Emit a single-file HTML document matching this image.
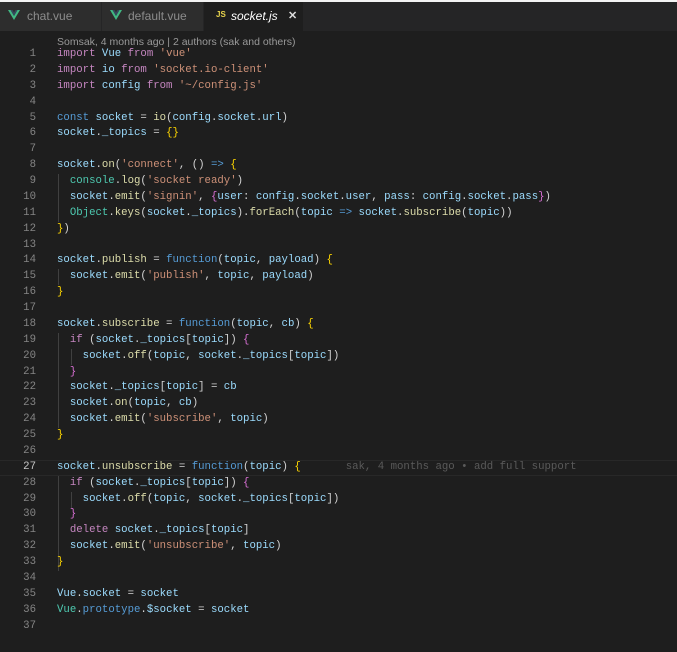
<!DOCTYPE html>
<html><head><meta charset="utf-8"><style>
*{margin:0;padding:0;box-sizing:border-box}
body{width:677px;height:652px;background:#1e1e1e;overflow:hidden;position:relative;font-family:"Liberation Sans",sans-serif}
.top{position:absolute;left:0;top:0;width:677px;height:2px;background:#f3f3f3}
.bar{position:absolute;left:0;top:2px;width:677px;height:29px;background:#252526}
.tab{position:absolute;top:2px;height:29px;background:#2d2d2d;color:#8c8c8c;font-size:12px;line-height:29px;font-style:normal}
.tab.act{background:#1e1e1e;color:#fff;font-style:italic}
.v{position:absolute;left:8px;top:8px;width:12px;height:10px}
.lens{position:absolute;left:57px;top:36px;font-size:10.5px;color:#999}
.ln{position:absolute;left:0;width:36px;text-align:right;font-family:"Liberation Mono",monospace;font-size:10.7px;color:#858585;line-height:15.87px}
.code{position:absolute;left:57px;top:47px;font-family:"Liberation Mono",monospace;font-size:10.7px;color:#d4d4d4;line-height:15.87px;white-space:pre}
.k{color:#c586c0}.b{color:#569cd6}.s{color:#ce9178}.f{color:#dcdcaa}.t{color:#4ec9b0}.p{color:#9cdcfe}.y{color:#ffd700}.o{color:#da70d6}
.g{position:absolute;width:1px;background:#404040}
.cur{position:absolute;left:0;top:460px;width:677px;height:16px;border-top:1px solid #282828;border-bottom:1px solid #282828}
</style></head><body>
<div class="top"></div>
<div class="bar"></div>
<div class="tab" style="left:0;width:101px"><svg class="v" viewBox="0 0 12 10"><path d="M0 0h2.5L6 6 9.5 0H12L6 10z" fill="#41b883"/><path d="M2.5 0h2L6 2.5 7.5 0h2L6 6z" fill="#35495e"/></svg><span style="position:absolute;left:27px">chat.vue</span></div>
<div class="tab" style="left:102px;width:101px"><svg class="v" viewBox="0 0 12 10"><path d="M0 0h2.5L6 6 9.5 0H12L6 10z" fill="#41b883"/><path d="M2.5 0h2L6 2.5 7.5 0h2L6 6z" fill="#35495e"/></svg><span style="position:absolute;left:26px">default.vue</span></div>
<div class="tab act" style="left:204px;width:99px"><span style="position:absolute;left:12px;top:-2px;font-size:8px;font-weight:bold;color:#e8d44d;font-style:normal">JS</span><span style="position:absolute;left:27px">socket.js</span><span style="position:absolute;left:84px;font-style:normal;font-weight:bold;font-size:11px;color:#ddd">✕</span></div>
<div class="lens">Somsak, 4 months ago | 2 authors (sak and others)</div>
<div class="cur"></div>
<div class="ln" style="top:47px">1<br>2<br>3<br>4<br>5<br>6<br>7<br>8<br>9<br>10<br>11<br>12<br>13<br>14<br>15<br>16<br>17<br>18<br>19<br>20<br>21<br>22<br>23<br>24<br>25<br>26<br><span style="color:#c6c6c6">27</span><br>28<br>29<br>30<br>31<br>32<br>33<br>34<br>35<br>36<br>37</div>
<div class="g" style="left:58px;top:174px;height:48px"></div>
<div class="g" style="left:58px;top:269px;height:16px"></div>
<div class="g" style="left:58px;top:333px;height:95px"></div>
<div class="g" style="left:71px;top:349px;height:16px"></div>
<div class="g" style="left:58px;top:476px;height:95px"></div>
<div class="g" style="left:71px;top:492px;height:16px"></div>
<div class="code"><span class="k">import</span> <span class="p">Vue</span> <span class="k">from</span> <span class="s">'vue'</span>
<span class="k">import</span> <span class="p">io</span> <span class="k">from</span> <span class="s">'socket.io-client'</span>
<span class="k">import</span> <span class="p">config</span> <span class="k">from</span> <span class="s">'~/config.js'</span>

<span class="b">const</span> <span class="p">socket</span> = <span class="f">io</span>(<span class="p">config</span>.<span class="p">socket</span>.<span class="p">url</span>)
<span class="p">socket</span>.<span class="p">_topics</span> = <span class="y">{}</span>

<span class="p">socket</span>.<span class="f">on</span>(<span class="s">'connect'</span>, () <span class="b">=&gt;</span> <span class="y">{</span>
  <span class="t">console</span>.<span class="f">log</span>(<span class="s">'socket ready'</span>)
  <span class="p">socket</span>.<span class="f">emit</span>(<span class="s">'signin'</span>, <span class="o">{</span><span class="p">user</span>: <span class="p">config</span>.<span class="p">socket</span>.<span class="p">user</span>, <span class="p">pass</span>: <span class="p">config</span>.<span class="p">socket</span>.<span class="p">pass</span><span class="o">}</span>)
  <span class="t">Object</span>.<span class="f">keys</span>(<span class="p">socket</span>.<span class="p">_topics</span>).<span class="f">forEach</span>(<span class="p">topic</span> <span class="b">=&gt;</span> <span class="p">socket</span>.<span class="f">subscribe</span>(<span class="p">topic</span>))
<span class="y">}</span>)

<span class="p">socket</span>.<span class="f">publish</span> = <span class="b">function</span>(<span class="p">topic</span>, <span class="p">payload</span>) <span class="y">{</span>
  <span class="p">socket</span>.<span class="f">emit</span>(<span class="s">'publish'</span>, <span class="p">topic</span>, <span class="p">payload</span>)
<span class="y">}</span>

<span class="p">socket</span>.<span class="f">subscribe</span> = <span class="b">function</span>(<span class="p">topic</span>, <span class="p">cb</span>) <span class="y">{</span>
  <span class="k">if</span> (<span class="p">socket</span>.<span class="p">_topics</span>[<span class="p">topic</span>]) <span class="o">{</span>
    <span class="p">socket</span>.<span class="f">off</span>(<span class="p">topic</span>, <span class="p">socket</span>.<span class="p">_topics</span>[<span class="p">topic</span>])
  <span class="o">}</span>
  <span class="p">socket</span>.<span class="p">_topics</span>[<span class="p">topic</span>] = <span class="p">cb</span>
  <span class="p">socket</span>.<span class="f">on</span>(<span class="p">topic</span>, <span class="p">cb</span>)
  <span class="p">socket</span>.<span class="f">emit</span>(<span class="s">'subscribe'</span>, <span class="p">topic</span>)
<span class="y">}</span>

<span class="p">socket</span>.<span class="f">unsubscribe</span> = <span class="b">function</span>(<span class="p">topic</span>) <span class="y">{</span>       <span style="color:#5a5a5a">sak, 4 months ago • add full support</span>
  <span class="k">if</span> (<span class="p">socket</span>.<span class="p">_topics</span>[<span class="p">topic</span>]) <span class="o">{</span>
    <span class="p">socket</span>.<span class="f">off</span>(<span class="p">topic</span>, <span class="p">socket</span>.<span class="p">_topics</span>[<span class="p">topic</span>])
  <span class="o">}</span>
  <span class="k">delete</span> <span class="p">socket</span>.<span class="p">_topics</span>[<span class="p">topic</span>]
  <span class="p">socket</span>.<span class="f">emit</span>(<span class="s">'unsubscribe'</span>, <span class="p">topic</span>)
<span class="y">}</span>

<span class="p">Vue</span>.<span class="p">socket</span> = <span class="p">socket</span>
<span class="t">Vue</span>.<span class="b">prototype</span>.<span class="p">$socket</span> = <span class="p">socket</span>
</div>
</body></html>
